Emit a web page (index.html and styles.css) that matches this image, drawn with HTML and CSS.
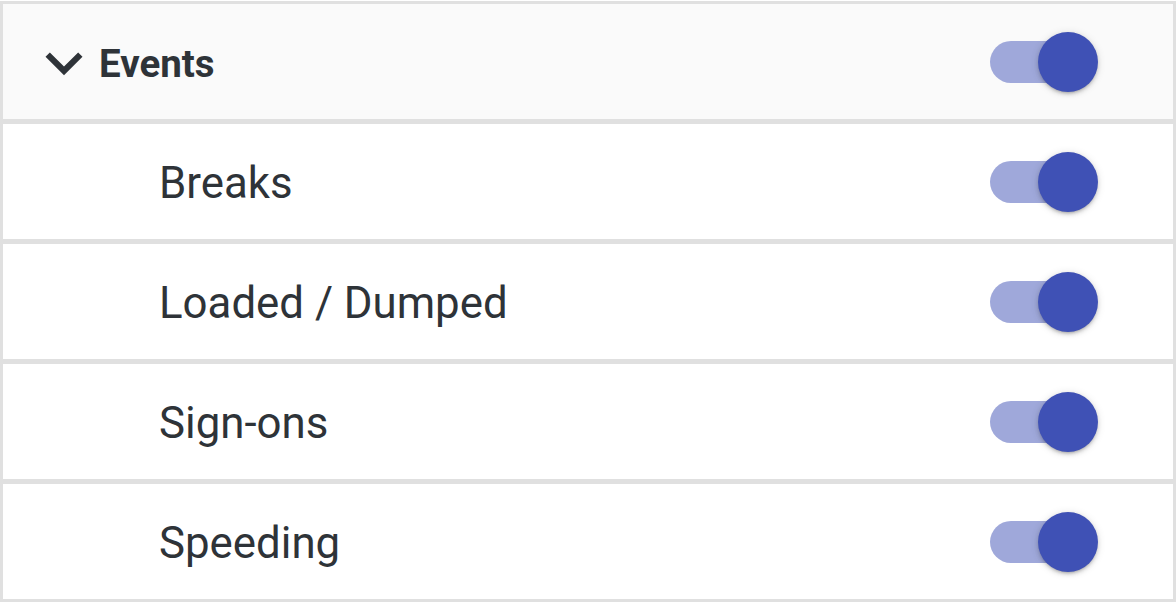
FILE: index.html
```html
<!DOCTYPE html>
<html>
<head>
<meta charset="utf-8">
<link rel="stylesheet" href="styles.css">
</head>
<body>
<div class="list">
  <div class="row header">
    <svg class="chevron" viewBox="0 0 24 24"><path d="M16.59 8.59L12 13.17 7.41 8.59 6 10l6 6 6-6z"/></svg>
    <span class="title">Events</span>
    <span class="switch"><span class="track"></span><span class="thumb"></span></span>
  </div>
  <div class="row item">
    <span class="label">Breaks</span>
    <span class="switch"><span class="track"></span><span class="thumb"></span></span>
  </div>
  <div class="row item">
    <span class="label">Loaded / Dumped</span>
    <span class="switch"><span class="track"></span><span class="thumb"></span></span>
  </div>
  <div class="row item">
    <span class="label">Sign-ons</span>
    <span class="switch"><span class="track"></span><span class="thumb"></span></span>
  </div>
  <div class="row item">
    <span class="label">Speeding</span>
    <span class="switch"><span class="track"></span><span class="thumb"></span></span>
  </div>
</div>
</body>
</html>
```

FILE: styles.css
```css
html, body {
  margin: 0;
  padding: 0;
  background: #ffffff;
}
body {
  font-family: Roboto, "Noto Sans", sans-serif;
  color: #2e3338;
  overflow: hidden;
}
.list {
  margin-top: 1px;
  border: 3px solid #e0e0e0;
  display: flex;
  flex-direction: column;
}
.row {
  display: flex;
  align-items: center;
  height: 115px;
  padding-right: 75px;
  background: #ffffff;
}
.row + .row {
  border-top: 5px solid #e0e0e0;
}
.header {
  background: #fafafa;
  padding-left: 24px;
}
.chevron {
  width: 74px;
  height: 74px;
  fill: #2e3338;
  flex: none;
  margin-top: 2px;
}
.title {
  font-size: 38.5px;
  font-weight: 700;
  margin-left: -2px;
  padding-top: 4px;
}
.item {
  padding-left: 156px;
}
.label {
  font-size: 43.8px;
  font-weight: 400;
  padding-top: 2px;
}
.switch {
  margin-left: auto;
  display: flex;
  align-items: center;
  width: 108px;
  height: 60px;
  position: relative;
  flex: none;
}
.track {
  width: 102px;
  height: 42px;
  border-radius: 21px;
  background: #9fa8da;
}
.thumb {
  position: absolute;
  right: 0;
  top: 0;
  width: 60px;
  height: 60px;
  border-radius: 50%;
  background: #3f51b5;
  box-shadow: 0 3px 3px -2px rgba(0,0,0,0.2), 0 2px 4px 0 rgba(0,0,0,0.14), 0 1px 8px 0 rgba(0,0,0,0.12);
}
```
